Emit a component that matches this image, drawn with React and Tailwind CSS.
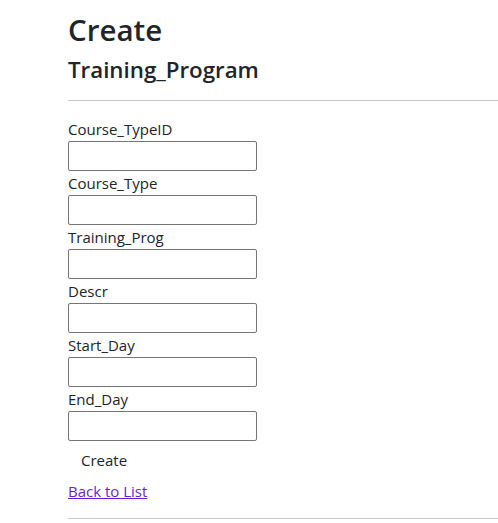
import React from "react";

const fields = ["Course_TypeID", "Course_Type", "Training_Prog", "Descr", "Start_Day", "End_Day"];

export default function App() {
  return (
    <div className="min-h-[523px] bg-white pl-[68px] pt-[12px] font-['Open_Sans',sans-serif] text-[15px] leading-6 text-[#212529]">
      <h1 className="mb-[10px] text-[29.5px] font-semibold leading-[1.2]">Create</h1>
      <h4 className="mb-2 text-[22.3px] font-semibold leading-[1.2]">Training_Program</h4>
      <hr className="my-4 border-0 border-t border-[#c8c9ca]" />

      <form className="flex flex-col" onSubmit={(e) => e.preventDefault()}>
        {fields.map((f) => (
          <div key={f} className="flex flex-col items-start">
            <label htmlFor={f} className="leading-6">
              {f}
            </label>
            <input
              id={f}
              type="text"
              className="h-[30px] w-[189px] rounded-[2px] border border-[#767676] bg-white px-[2px]"
            />
          </div>
        ))}
        <div>
          <button type="submit" className="border border-transparent px-3 py-1.5 leading-6">
            Create
          </button>
        </div>
      </form>

      <div className="leading-6">
        <a href="#" className="text-[#6a1fd6] underline">
          Back to List
        </a>
      </div>

      <footer className="mt-[15px] border-t border-[#c8c9ca]" />
    </div>
  );
}
